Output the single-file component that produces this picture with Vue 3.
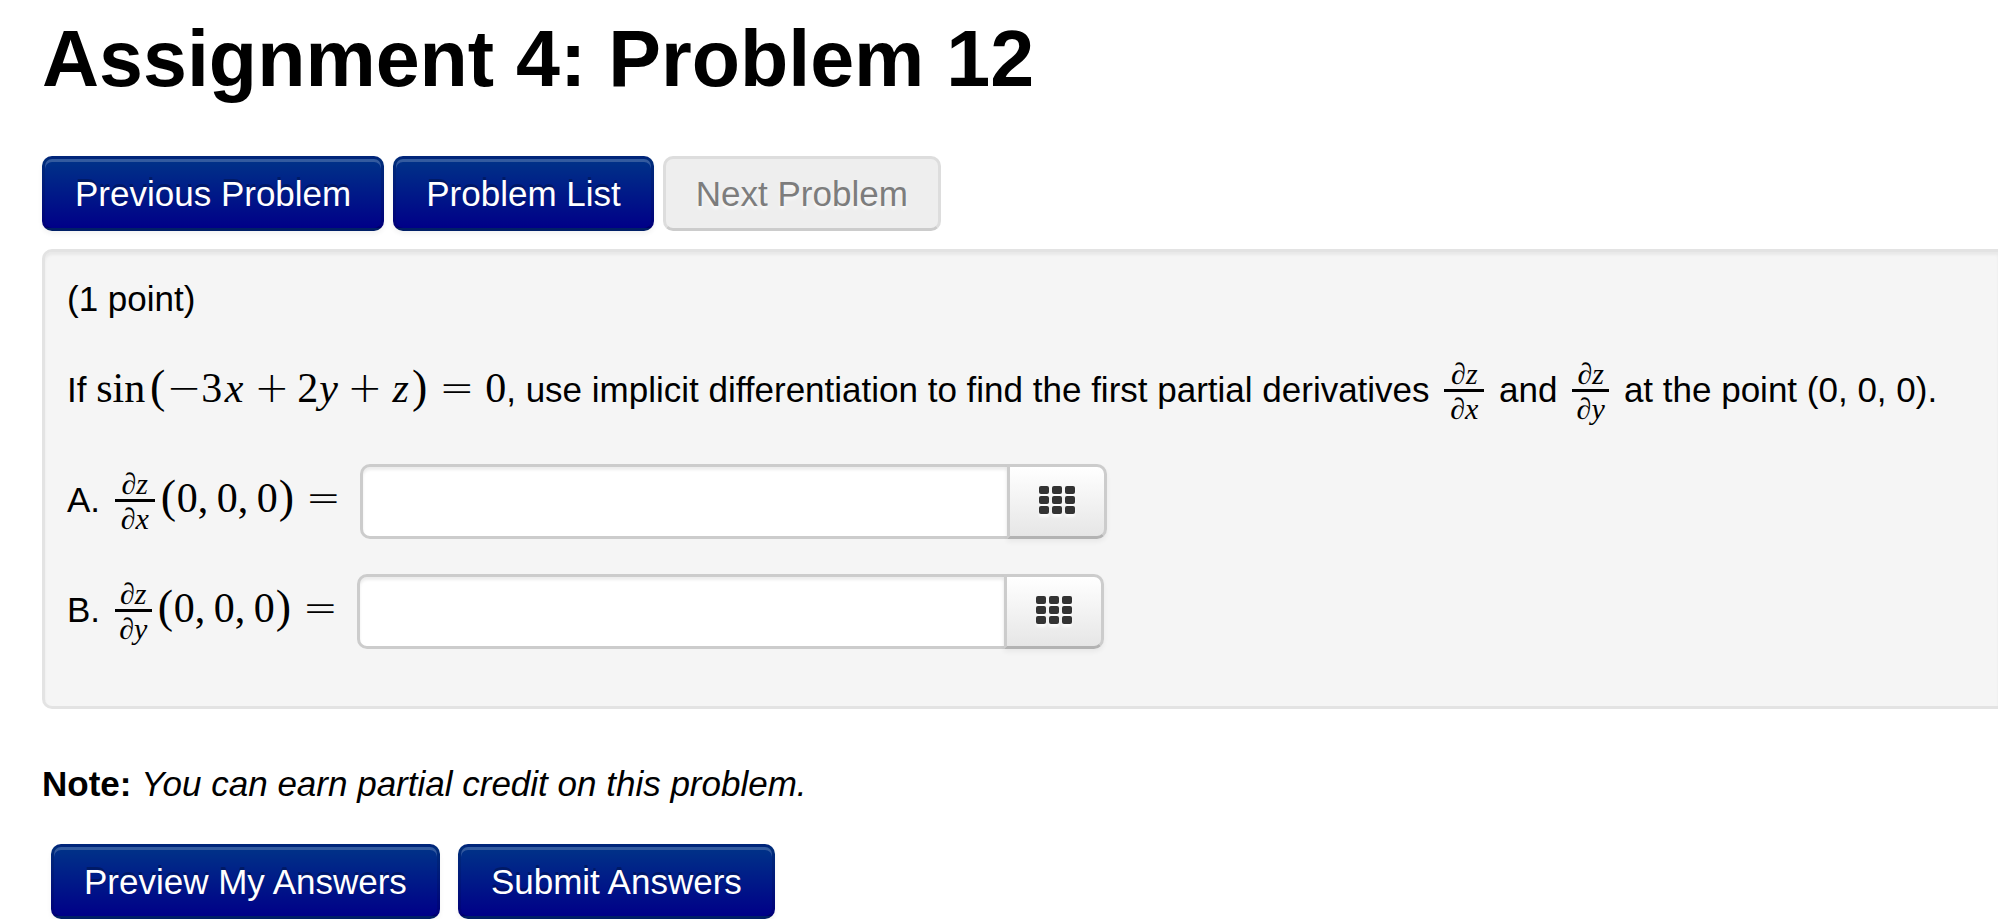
<script setup>
import { ref, h } from 'vue'

const answers = ref([
  { id: 'answer-a', letter: 'A.', variable: 'x', value: '' },
  { id: 'answer-b', letter: 'B.', variable: 'y', value: '' },
])

const cells = [0, 1, 2].flatMap((row) => [0, 1, 2].map((col) => ({ x: col * 13, y: row * 10 })))

const Partial = (props) =>
  h('span', { class: ['frac', `by-${props.by}`] }, [
    h('span', { class: 'num' }, [h('i', '∂'), h('i', 'z')]),
    h('span', { class: 'den' }, [h('i', '∂'), h('i', props.by)]),
  ])
Partial.props = ['by']
</script>

<template>
  <main class="page">
    <h1>Assignment 4: Problem 12</h1>

    <nav class="problem-nav">
      <a class="btn primary" href="#previous">Previous Problem</a>
      <a class="btn primary" href="#list">Problem List</a>
      <button class="btn" type="button" disabled>Next Problem</button>
    </nav>

    <form @submit.prevent>
      <section class="well">
        <p class="points">(1 point)</p>
        <p class="question">
          If <span class="math"><span class="fn">sin</span><span class="paren">(</span><span class="op">−</span><span>3</span><i class="x">x</i><span class="op binary">+</span><span>2</span><i>y</i><span class="op binary">+</span><i>z</i><span class="paren">)</span><span class="op relation">=</span><span>0</span></span>, use implicit differentiation to find the first partial derivatives
          <Partial by="x" /> and <Partial by="y" /> at the point (0, 0, 0).
        </p>

        <div v-for="a in answers" :key="a.id" class="answer">
          <label :for="a.id">
            {{ a.letter }} <Partial :by="a.variable" /><span class="math"><span class="paren">(</span><span>0</span><span class="comma">,</span><span>0</span><span class="comma">,</span><span>0</span><span class="paren">)</span><span class="op relation">=</span></span>
          </label>
          <div class="field">
            <input :id="a.id" v-model="a.value" type="text" autocomplete="off" />
            <button class="btn keypad" type="button" aria-label="Equation editor">
              <svg width="36" height="28" viewBox="0 0 36 28" aria-hidden="true">
                <rect v-for="(c, i) in cells" :key="i" :x="c.x" :y="c.y" width="10" height="8" rx="2" />
              </svg>
            </button>
          </div>
        </div>
      </section>

      <p class="note"><strong>Note:</strong> <em>You can earn partial credit on this problem.</em></p>

      <div class="actions">
        <button class="btn primary" type="button">Preview My Answers</button>
        <button class="btn primary" type="submit">Submit Answers</button>
      </div>
    </form>
  </main>
</template>

<style>
body {
  margin: 0;
  background: #fff;
}
</style>

<style scoped>
.page {
  padding: 9px 0 0 42px;
  color: #000;
  font: 35px/50px "Liberation Sans", Arial, sans-serif;
}

h1,
p {
  margin: 0;
}

h1 {
  font-size: 79px;
  line-height: 100px;
}

.problem-nav {
  display: flex;
  flex-wrap: wrap;
  gap: 9px;
  margin-top: 47px;
}

.btn {
  box-sizing: border-box;
  padding: 10px 30px;
  border: 3px solid #ddd;
  border-bottom-color: #ccc;
  border-radius: 10px;
  background: #eee;
  color: #7d7d7d;
  font: inherit;
  line-height: 49px;
  text-decoration: none;
  text-shadow: 0 3px 3px rgba(255, 255, 255, 0.75);
}

.btn.primary {
  border-color: rgba(0, 0, 0, 0.1) rgba(0, 0, 0, 0.1) rgba(0, 0, 0, 0.25);
  background: #002a88 linear-gradient(#038, #008) repeat-x;
  box-shadow: inset 0 3px 0 rgba(255, 255, 255, 0.2), 0 3px 5px rgba(0, 0, 0, 0.05);
  color: #fff;
  text-shadow: 0 -3px 0 rgba(0, 0, 0, 0.25);
}

.well {
  margin-top: 18px;
  padding: 22px 0 57px 22px;
  border: 3px solid #e3e3e3;
  border-right: 0;
  border-radius: 10px 0 0 10px;
  background: #f5f5f5;
  box-shadow: inset 0 3px 3px rgba(0, 0, 0, 0.05);
}

.question {
  margin: 35px 0 40px;
}

.math,
.well :deep(.frac) {
  font-family: "Liberation Serif", "Times New Roman", serif;
}

.math {
  display: inline-flex;
  align-items: baseline;
  font-size: 42px;
}

.math i {
  width: 21px;
  text-align: center;
}

.math i.x {
  width: 24px;
}

.fn {
  width: 53px;
}

.paren {
  width: 17px;
  font-size: 46px;
  text-align: center;
}

.comma {
  width: 19px;
}

.op {
  width: 35px;
  font-family: "DejaVu Sans", sans-serif;
  font-weight: 200;
  text-align: center;
}

.binary {
  margin: 0 8px;
}

.relation {
  margin: 0 11px;
}

.answer .relation {
  margin-right: 0;
}

.well :deep(.frac) {
  display: inline-flex;
  flex-direction: column;
  width: 40px;
  margin: 0 5px;
  font-size: 30px;
  line-height: 30px;
  text-align: center;
  vertical-align: 18px;
}

.well :deep(.by-y) {
  width: 37px;
}

.well :deep(.den) {
  padding-top: 2px;
  border-top: 3px solid #000;
}

.answer {
  display: flex;
  align-items: center;
  gap: 19px;
}

.answer + .answer {
  margin-top: 35px;
}

.field {
  display: flex;
  flex: 0 1 747px;
  min-width: 0;
}

.field input {
  box-sizing: border-box;
  flex: 1;
  min-width: 0;
  height: 75px;
  padding: 10px 15px;
  border: 3px solid #ccc;
  border-radius: 10px 0 0 10px;
  outline: 0;
  background: #fff;
  box-shadow: inset 0 3px 3px rgba(0, 0, 0, 0.075);
  font: inherit;
}

.keypad {
  display: flex;
  flex: none;
  align-items: center;
  justify-content: center;
  width: 100px;
  margin-left: -3px;
  padding: 0 0 3px;
  border-color: #ccc #ccc #b3b3b3;
  border-radius: 0 10px 10px 0;
  background: linear-gradient(#fff, #e6e6e6);
  box-shadow: 0 3px 5px rgba(0, 0, 0, 0.05);
}

.keypad svg {
  fill: #333;
  filter: drop-shadow(0 3px 1px rgba(255, 255, 255, 0.75));
}

.note {
  margin-top: 50px;
}

.actions {
  display: flex;
  flex-wrap: wrap;
  gap: 18px;
  margin: 35px 0 0 9px;
}
</style>
